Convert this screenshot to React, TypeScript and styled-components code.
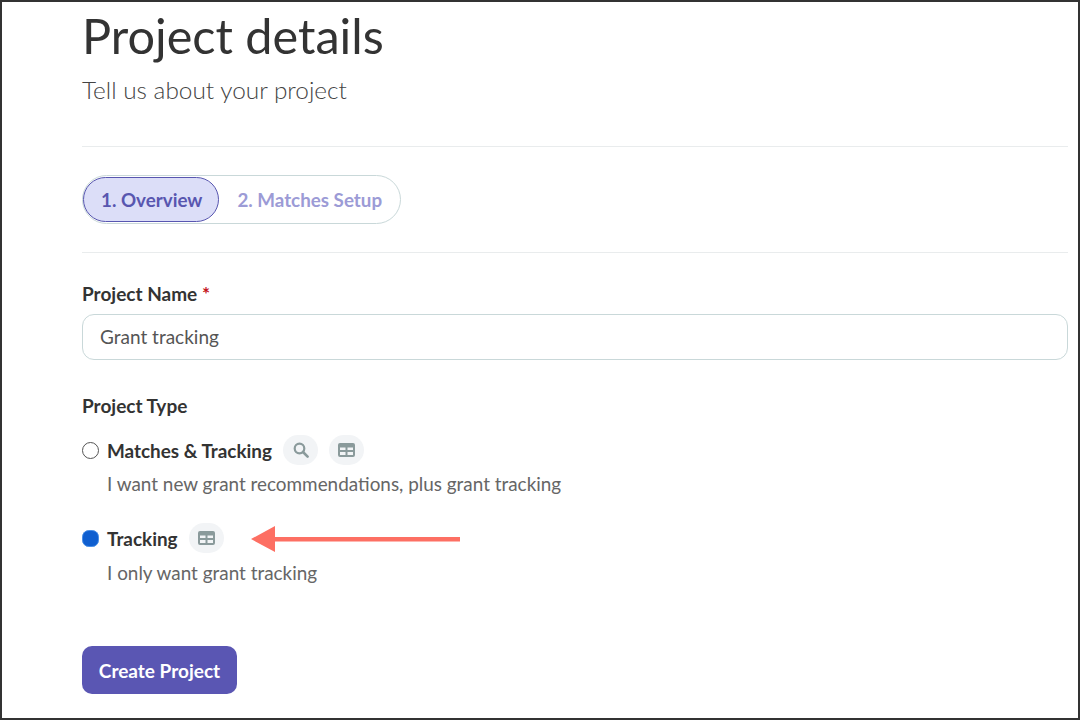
import React from "react";
import styled, { createGlobalStyle } from "styled-components";

const Global = createGlobalStyle`
  html, body { margin: 0; padding: 0; background: #fff; }
  body { font-family: Lato, "Open Sans", sans-serif; }
`;

const Frame = styled.div`
  box-sizing: border-box;
  width: 1080px;
  height: 720px;
  overflow: hidden;
  border: 2px solid #333;
  padding: 0 10px 0 80px;
  display: flex;
  flex-direction: column;
`;

const Title = styled.h1`
  margin: 4px 0 0;
  font-size: 48.6px;
  line-height: 58px;
  font-weight: 400;
  color: #333;
`;

const Subtitle = styled.p`
  margin: 11px 0 0;
  font-size: 24.4px;
  line-height: 30px;
  font-weight: 300;
  color: #444;
`;

const Rule = styled.hr<{ $top: number }>`
  width: 100%;
  margin: ${(p) => p.$top}px 0 0;
  border: 0;
  border-top: 1px solid #e9eced;
`;

const Steps = styled.div`
  box-sizing: border-box;
  margin-top: 28px;
  width: 319px;
  height: 49px;
  border: 1px solid #c9d8d9;
  border-radius: 25px;
  padding: 1px 0;
  display: flex;
  align-items: center;
`;

const Step = styled.div<{ $active?: boolean }>`
  box-sizing: border-box;
  height: 45px;
  display: flex;
  align-items: center;
  white-space: nowrap;
  font-size: 18.8px;
  font-weight: 700;
  border-radius: 23px;
  color: ${(p) => (p.$active ? "#5856b0" : "#9c9bd6")};
  background: ${(p) => (p.$active ? "#dcdef8" : "transparent")};
  border: ${(p) => (p.$active ? "1px solid #5856b0" : "0")};
  padding: ${(p) => (p.$active ? "0 16px 0 17px" : "0 0 0 18px")};
`;

const Label = styled.div`
  margin-top: 29px;
  font-size: 19px;
  line-height: 24px;
  font-weight: 700;
  color: #333;
`;

const Required = styled.span`
  color: #c4121a;
`;

const NameInput = styled.input`
  box-sizing: border-box;
  display: block;
  width: 986px;
  height: 46px;
  margin-top: 8px;
  padding: 0 17px 2px;
  border: 1px solid #c9d8d9;
  border-radius: 12px;
  outline: none;
  background: #fff;
  font-family: inherit;
  font-size: 19px;
  color: #555;
`;

const TypeLabel = styled(Label)`
  margin-top: 34px;
`;

const Option = styled.div<{ $top: number }>`
  margin-top: ${(p) => p.$top}px;
`;

const OptionRow = styled.div`
  display: flex;
  align-items: center;
  height: 30px;
`;

const Radio = styled.span<{ $checked?: boolean }>`
  box-sizing: border-box;
  width: 17px;
  height: 17px;
  flex: none;
  border-radius: ${(p) => (p.$checked ? "40%" : "50%")};
  border: ${(p) => (p.$checked ? "1px solid #4a90e8" : "1px solid #555")};
  background: ${(p) => (p.$checked ? "#0f5fd0" : "#fff")};
`;

const OptionName = styled.span`
  margin-left: 8px;
  font-size: 18.9px;
  font-weight: 700;
  color: #333;
`;

const IconChip = styled.span`
  width: 35px;
  height: 30px;
  border-radius: 15px;
  background: #f2f4f6;
  display: flex;
  align-items: center;
  justify-content: center;
  margin-left: 11px;
  flex: none;
`;

const Description = styled.div<{ $top: number }>`
  margin: ${(p) => p.$top}px 0 0 25px;
  font-size: 18.9px;
  line-height: 24px;
  color: #666;
`;

const Arrow = styled.svg`
  margin: 2px 0 0 27px;
  flex: none;
`;

const CreateButton = styled.button`
  box-sizing: border-box;
  width: 155px;
  height: 48px;
  margin-top: 61px;
  border: 0;
  border-radius: 10px;
  background: #5a56b3;
  color: #fff;
  font-family: inherit;
  font-size: 19px;
  font-weight: 700;
`;

const SearchIcon = () => (
  <svg width="16" height="16" viewBox="0 0 16 16" fill="none">
    <circle cx="6.5" cy="6.5" r="4.8" stroke="#8a9a9b" strokeWidth="2.2" />
    <path d="M10 10l4.600 4.600" stroke="#8a9a9b" strokeWidth="2.600" strokeLinecap="round" />
  </svg>
);

const TableIcon = () => (
  <svg width="17" height="14" viewBox="0 0 17 14">
    <path
      fillRule="evenodd"
      fill="#8a9a9b"
      d="M2 0h13a2 2 0 0 1 2 2v10a2 2 0 0 1-2 2H2a2 2 0 0 1-2-2V2a2 2 0 0 1 2-2zM2 4.500v2.500h5.500V4.500zm7.500 0v2.500H15V4.500zM2 9v3h5.500V9zm7.500 0v3H15V9z"
    />
  </svg>
);

export default function App() {
  return (
    <>
      <Global />
      <Frame>
        <Title>Project details</Title>
        <Subtitle>Tell us about your project</Subtitle>
        <Rule $top={41} />
        <Steps>
          <Step $active>1. Overview</Step>
          <Step>2. Matches Setup</Step>
        </Steps>
        <Rule $top={28} />
        <Label>
          Project Name <Required>*</Required>
        </Label>
        <NameInput readOnly defaultValue="Grant tracking" />
        <TypeLabel>Project Type</TypeLabel>
        <Option $top={17}>
          <OptionRow>
            <Radio />
            <OptionName>Matches &amp; Tracking</OptionName>
            <IconChip>
              <SearchIcon />
            </IconChip>
            <IconChip>
              <TableIcon />
            </IconChip>
          </OptionRow>
          <Description $top={7}>I want new grant recommendations, plus grant tracking</Description>
        </Option>
        <Option $top={27}>
          <OptionRow>
            <Radio $checked />
            <OptionName>Tracking</OptionName>
            <IconChip>
              <TableIcon />
            </IconChip>
            <Arrow width="209" height="28" viewBox="0 0 209 28">
              <path d="M0 14L24 1v11h185v4.500H24V27z" fill="#fd6f63" />
            </Arrow>
          </OptionRow>
          <Description $top={8}>I only want grant tracking</Description>
        </Option>
        <CreateButton>Create Project</CreateButton>
      </Frame>
    </>
  );
}
